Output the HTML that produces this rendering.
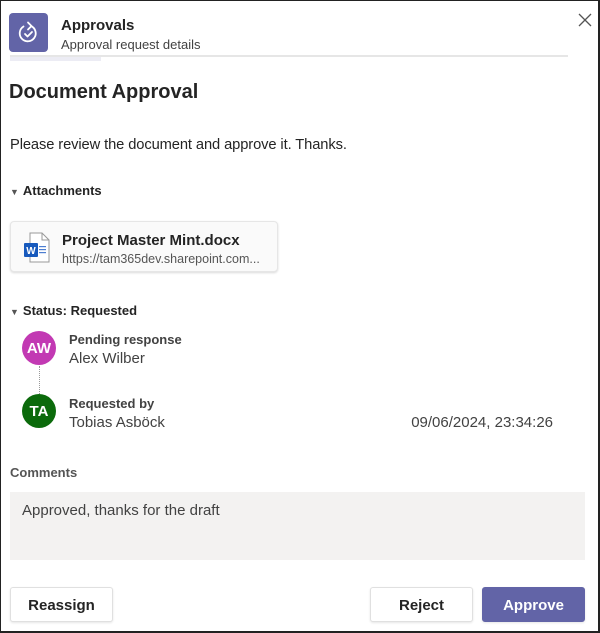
<!DOCTYPE html>
<html><head><style>
*{margin:0;padding:0;box-sizing:border-box}
body{width:600px;height:633px;background:#fff;font-family:"Liberation Sans",sans-serif;color:#242424;position:relative;overflow:hidden}
.frame{position:absolute;left:0;top:0;width:600px;height:633px;border:1px solid #222;border-right-width:2px;border-bottom-width:2px}
.a{position:absolute;white-space:nowrap}
.btn{position:absolute;height:35px;border:1px solid #e0e0e0;border-radius:3px;background:#fff;font-size:15px;font-weight:bold;display:flex;align-items:center;justify-content:center;box-shadow:0 1px 2px rgba(0,0,0,.1);padding-top:2px}
.av{position:absolute;width:34px;height:34px;border-radius:50%;color:#fff;font-weight:bold;font-size:15px;display:flex;align-items:center;justify-content:center}
</style></head><body>
<div class="frame"></div>
<div class="a" style="left:9px;top:13px;width:39px;height:39px;background:#6264a7;border-radius:4px">
<svg width="39" height="39" viewBox="0 0 39 39"><path d="M22 13 A8 8 0 1 1 14.5 13.5" fill="none" stroke="#fff" stroke-width="1.8" stroke-linecap="round"/><path d="M19 9.5 L22.5 13 L19 16.5" fill="none" stroke="#fff" stroke-width="1.8" stroke-linecap="round" stroke-linejoin="round"/><path d="M16 21 L18.5 23.5 L23 19" fill="none" stroke="#fff" stroke-width="1.8" stroke-linecap="round" stroke-linejoin="round"/></svg></div>
<div class="a" style="left:61px;top:17px;font-size:15px;font-weight:bold">Approvals</div>
<div class="a" style="left:61px;top:37px;font-size:13px;color:#424242">Approval request details</div>
<svg class="a" style="left:578px;top:13px" width="14" height="14"><path d="M1 1L13 13M13 1L1 13" stroke="#555" stroke-width="1.3"/></svg>
<div class="a" style="left:10px;top:55px;width:558px;height:2px;background:#e6e6e6"></div>
<div class="a" style="left:10px;top:57px;width:91px;height:4px;background:#ececf4"></div>
<div class="a" style="left:9px;top:81px;font-size:20px;font-weight:bold">Document Approval</div>
<div class="a" style="left:10px;top:137px;font-size:14.7px;letter-spacing:-0.1px">Please review the document and approve it. Thanks.</div>
<div class="a" style="left:10px;top:183px;font-size:13px;font-weight:bold"><span style="font-size:9px;color:#555;margin-right:4px">▼</span>Attachments</div>
<div class="a" style="left:10px;top:221px;width:268px;height:51px;background:#fafafa;border:1px solid #e6e6e6;border-radius:4px;box-shadow:0 1px 2px rgba(0,0,0,.15)">
<svg class="a" style="left:11px;top:10px" width="30" height="32"><path d="M8 1H20L27 8V30H8Z" fill="#fff" stroke="#999"/><path d="M20 1V8H27" fill="none" stroke="#999"/><rect x="17" y="14" width="7" height="1.2" fill="#4d7ed1"/><rect x="17" y="17" width="7" height="1.2" fill="#4d7ed1"/><rect x="17" y="20" width="7" height="1.2" fill="#4d7ed1"/><rect x="2" y="11" width="14" height="14" rx="1" fill="#185abd"/><text x="9" y="22" font-size="10" font-weight="bold" fill="#fff" text-anchor="middle" font-family="Liberation Sans">W</text></svg>
<div class="a" style="left:51px;top:10px;font-size:15px;font-weight:bold;color:#242424">Project Master Mint.docx</div>
<div class="a" style="left:51px;top:30px;font-size:12.5px;color:#555">https://tam365dev.sharepoint.com...</div></div>
<div class="a" style="left:10px;top:303px;font-size:13px;font-weight:bold"><span style="font-size:9px;color:#555;margin-right:4px">▼</span>Status: Requested</div>
<div class="av" style="left:22px;top:331px;background:#c239b3">AW</div>
<div class="a" style="left:39px;top:366px;height:28px;border-left:1px dotted #999"></div>
<div class="av" style="left:22px;top:394px;background:#0b6a0b">TA</div>
<div class="a" style="left:69px;top:332px;font-size:13px;font-weight:bold;color:#424242">Pending response</div>
<div class="a" style="left:69px;top:350px;font-size:15px;color:#424242">Alex Wilber</div>
<div class="a" style="left:69px;top:396px;font-size:13px;font-weight:bold;color:#424242">Requested by</div>
<div class="a" style="left:69px;top:414px;font-size:15px;color:#424242">Tobias Asböck</div>
<div class="a" style="right:47px;top:414px;font-size:15px;color:#424242">09/06/2024, 23:34:26</div>
<div class="a" style="left:10px;top:465px;font-size:13px;font-weight:bold;color:#555">Comments</div>
<div class="a" style="left:10px;top:492px;width:575px;height:68px;background:#f3f2f1;padding:10px 12px;font-size:15px;color:#424242">Approved, thanks for the draft</div>
<div class="btn" style="left:10px;top:587px;width:103px">Reassign</div>
<div class="btn" style="left:370px;top:587px;width:103px">Reject</div>
<div class="btn" style="left:482px;top:587px;width:103px;background:#6264a7;border-color:#6264a7;color:#fff">Approve</div>
</body></html>
